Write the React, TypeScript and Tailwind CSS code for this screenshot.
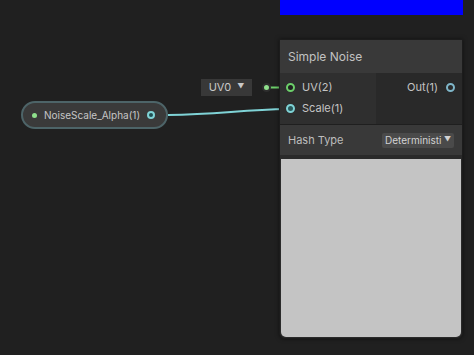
export default function App() {
  return (
    <div className="relative w-[474px] h-[355px] overflow-hidden bg-[#202020] font-['Inter',sans-serif] text-[11px] text-[#c4c4c4]">
      {/* wires */}
      <svg className="absolute left-0 top-0" width="474" height="355">
        <path d="M168 115 C 220 114, 240 110, 288 109" stroke="#7fd3d6" strokeWidth="2" fill="none" />
        <line x1="266" y1="87.5" x2="288" y2="87.5" stroke="#6ccf6a" strokeWidth="2" />
      </svg>

      {/* blue preview strip of a node above */}
      <div className="absolute left-[280px] top-0 w-[183px] h-[15px] bg-[#0000ff]" />

      {/* Simple Noise node */}
      <div className="absolute left-[279px] top-[39px] w-[184px] h-[300px] flex flex-col rounded-b-[6px] bg-[#2a2a2a] border border-[#1c1c1c] shadow-[0_0_4px_rgba(0,0,0,0.5)]">
        <div className="h-[33px] flex items-center px-2 bg-[#393939] text-[12px] text-[#c2c2c2]">Simple Noise</div>
        <div className="h-[52px] flex border-b border-[#1f1f1f]">
          <div className="w-[96px] bg-[#2f2f2f] flex flex-col pt-[7px] gap-[7px]">
            <div className="flex items-center gap-[7px] pl-[6px] h-[14px]">
              <span className="w-[9px] h-[9px] rounded-full border-2 border-[#6ccf6a] bg-[#202020]" />
              <span>UV(2)</span>
            </div>
            <div className="flex items-center gap-[7px] pl-[6px] h-[14px]">
              <span className="w-[9px] h-[9px] rounded-full border-2 border-[#7fd3d6] bg-[#2a5a5c]" />
              <span>Scale(1)</span>
            </div>
          </div>
          <div className="flex-1 bg-[#292929] flex justify-end pt-[7px] pr-[7px]">
            <div className="flex items-center gap-[8px] h-[14px]">
              <span>Out(1)</span>
              <span className="w-[9px] h-[9px] rounded-full border-2 border-[#7fb6c9] bg-[#2a2a2a]" />
            </div>
          </div>
        </div>
        <div className="h-[30px] flex items-center justify-between px-2 bg-[#393939]">
          <span className="text-[#bdbdbd]">Hash Type</span>
          <div className="w-[72px] h-[15px] flex items-center justify-between px-[3px] bg-[#4a4a4a] rounded-[2px] text-[#d2d2d2] text-[10px]">
            <span className="whitespace-nowrap">Deterministi</span>
            <span className="text-[7px]">▼</span>
          </div>
        </div>
        <div className="h-[4px]" />
        <div className="flex-1 mx-px mb-px rounded-b-[5px] bg-[#c4c4c4]" />
      </div>

      {/* UV0 dropdown */}
      <div className="absolute left-[201px] top-[79px] w-[51px] h-[17px] flex items-center justify-center gap-[6px] bg-[#383838] text-[#c8c8c8]">
        <span>UV0</span>
        <span className="text-[7px]">▼</span>
      </div>
      <span className="absolute left-[262px] top-[83px] w-[9px] h-[9px] rounded-full bg-[#8fe08c] border-2 border-[#2e2e2e]" />

      {/* property node */}
      <div className="absolute left-[21px] top-[101px] w-[147px] h-[28px] flex items-center rounded-full border-2 border-[#4d6468] bg-[#3a3a3a] pl-[9px] pr-[11px]">
        <span className="w-[5px] h-[5px] rounded-full bg-[#8fe08c]" />
        <span className="ml-[7px] text-[10px] text-[#c6c6c6] whitespace-nowrap">NoiseScale_Alpha(1)</span>
        <span className="ml-auto w-[8px] h-[8px] rounded-full border-2 border-[#7fd3d6] bg-[#1f4f52]" />
      </div>
    </div>
  );
}
